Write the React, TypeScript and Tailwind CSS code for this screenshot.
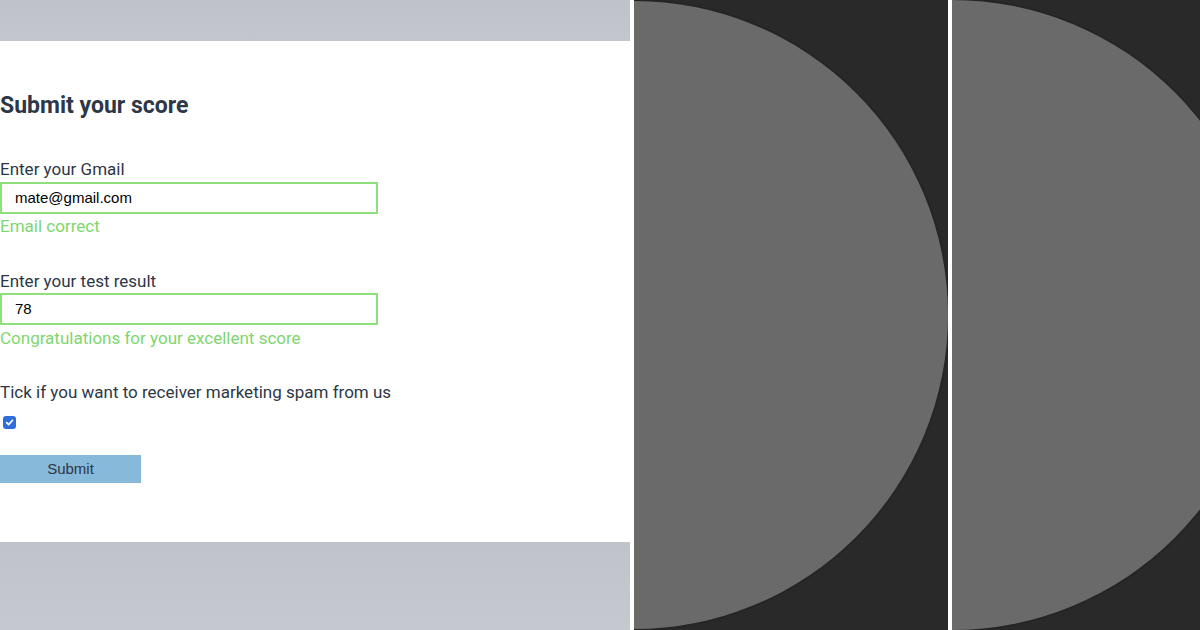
import React from "react";

function CircleSvg() {
  return (
    <svg className="block h-full w-full" viewBox="0 0 314 630" width="100%" height="100%">
      <rect x="0" y="0" width="314" height="630" fill="#292929" />
      <circle cx="0" cy="315" r="316" fill="#1f1f1f" opacity="0.35" />
      <circle cx="0" cy="315" r="314" fill="#6a6a6a" />
    </svg>
  );
}

function CircleSvgWide() {
  return (
    <svg className="block h-full w-full" viewBox="0 0 248 630" width="100%" height="100%">
      <rect x="0" y="0" width="248" height="630" fill="#292929" />
      <circle cx="0" cy="315" r="317" fill="#1f1f1f" opacity="0.35" />
      <circle cx="0" cy="315" r="315" fill="#6a6a6a" />
    </svg>
  );
}

export default function App() {
  const roboto = { fontFamily: 'Roboto, "Liberation Sans", sans-serif' };
  const arial = { fontFamily: '"Liberation Sans", Arial, sans-serif' };
  return (
    <div className="flex h-[630px] w-[1200px] gap-[4px] overflow-hidden bg-white">
      {/* Left panel */}
      <div className="flex h-full w-[630px] flex-col">
        <div className="h-[41px] w-full bg-gradient-to-b from-[#bfc3c9] to-[#c3c7cd]" />
        <div className="flex h-[501px] w-full flex-col bg-white pt-[51px]" style={roboto}>
          <h1 className="text-[23px] font-bold leading-[28px] text-[#2d3748]">Submit your score</h1>

          <label className="mt-[39px] text-[17px] leading-[20px] text-[#2d3748]">Enter your Gmail</label>
          <div
            className="mt-[3px] flex h-[32px] w-[378px] items-center border-2 border-[#8ee07d] pl-[13px] text-[15px] text-black"
            style={arial}
          >
            mate@gmail.com
          </div>
          <div className="mt-[2px] text-[17px] leading-[20px] text-[#80d66f]">Email correct</div>

          <label className="mt-[35px] text-[17px] leading-[20px] text-[#2d3748]">Enter your test result</label>
          <div
            className="mt-[2px] flex h-[32px] w-[378px] items-center border-2 border-[#8ee07d] pl-[13px] text-[15px] text-black"
            style={arial}
          >
            78
          </div>
          <div className="mt-[3px] text-[17px] leading-[20px] text-[#80d66f]">
            Congratulations for your excellent score
          </div>

          <label className="mt-[34px] text-[17px] leading-[20px] text-[#2d3748]">
            Tick if you want to receiver marketing spam from us
          </label>
          <div className="ml-[3px] mt-[14px] flex h-[13px] w-[13px] items-center justify-center rounded-[3px] bg-[#2f6fdc]">
            <svg width="9" height="9" viewBox="0 0 10 10">
              <path d="M1.8 5.2 L4 7.4 L8.3 2.6" fill="none" stroke="white" strokeWidth="1.8" strokeLinecap="round" strokeLinejoin="round" />
            </svg>
          </div>

          <button
            className="mt-[26px] flex h-[28px] w-[141px] items-center justify-center bg-[#86b9da] text-[15px] text-[#2d3748]"
            style={arial}
          >
            Submit
          </button>
        </div>
        <div className="w-full flex-1 bg-gradient-to-b from-[#c0c4ca] to-[#c5c9cf]" />
      </div>

      {/* Middle panel */}
      <div className="h-full w-[314px] overflow-hidden">
        <CircleSvg />
      </div>

      {/* Right panel */}
      <div className="h-full flex-1 overflow-hidden">
        <CircleSvgWide />
      </div>
    </div>
  );
}
